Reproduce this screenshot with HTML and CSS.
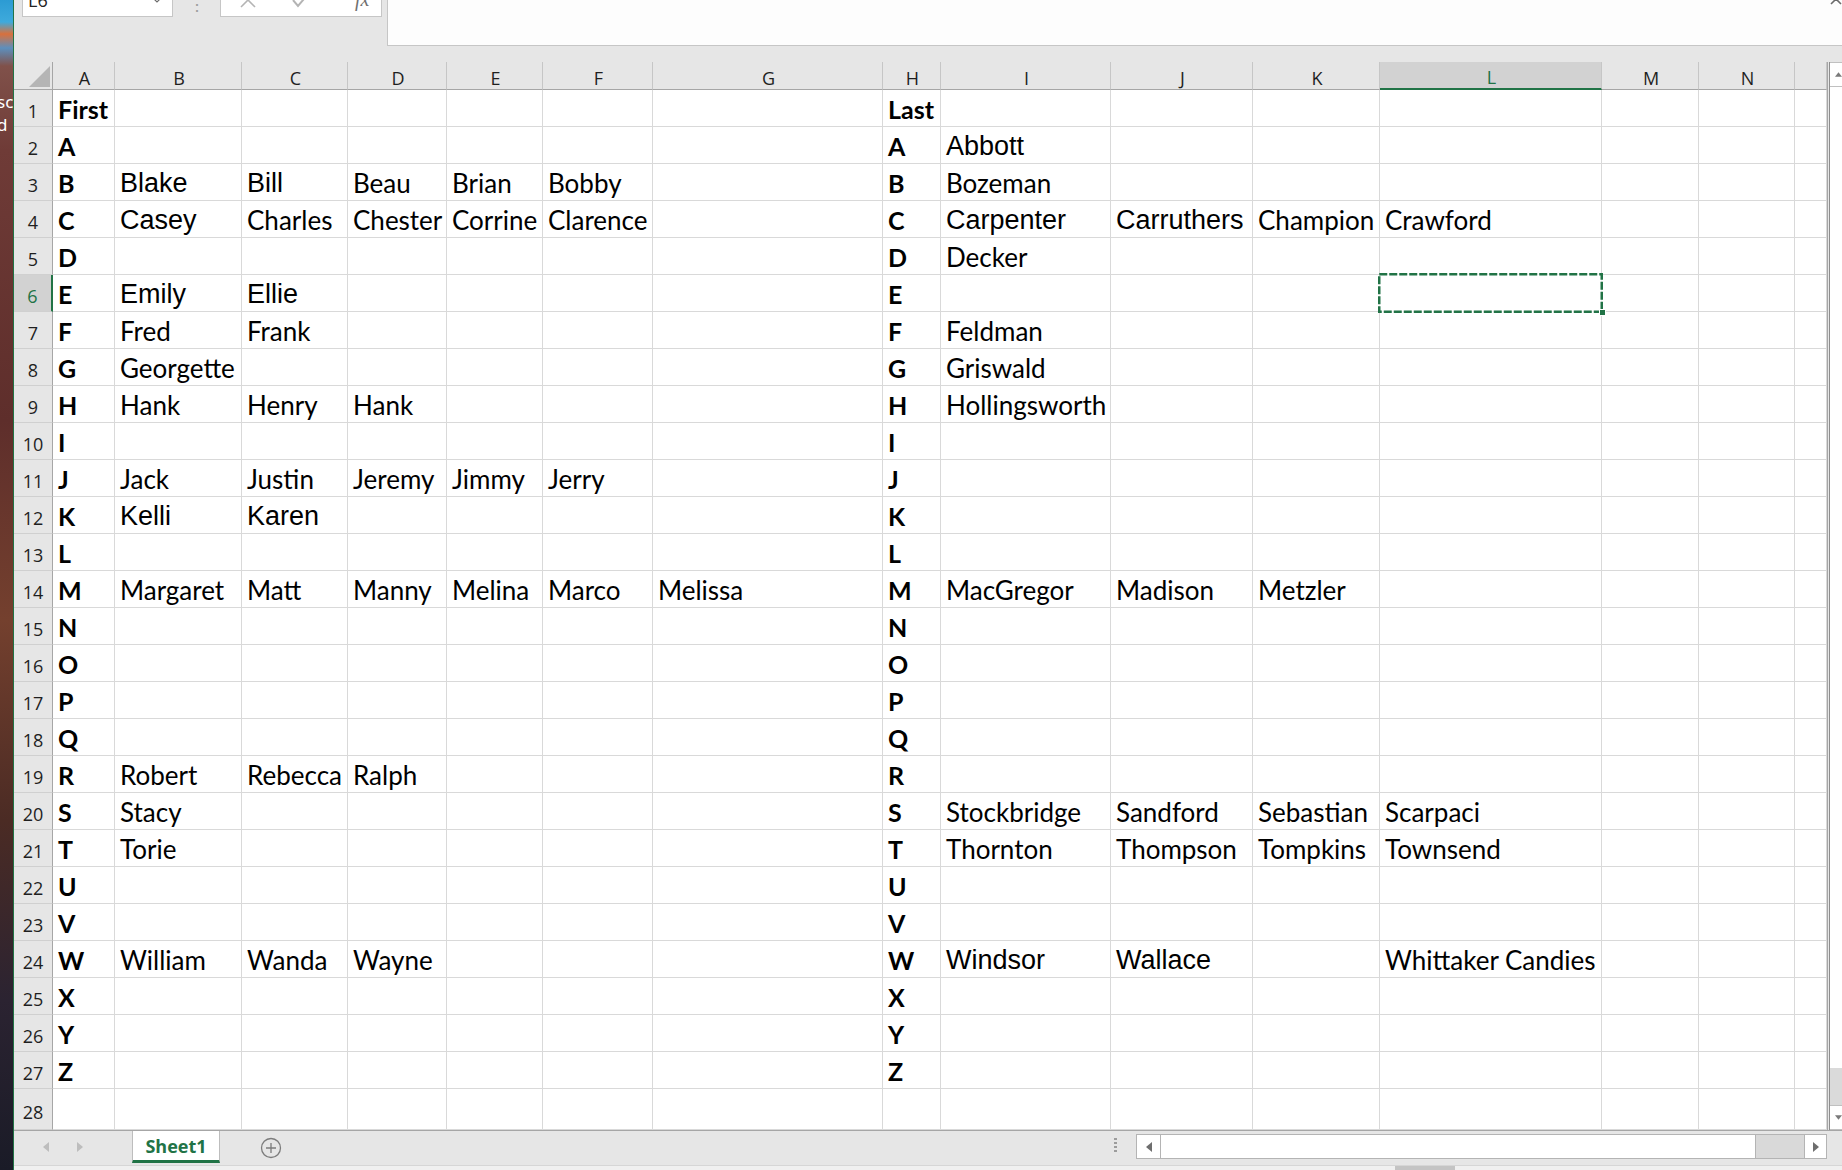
FILE: index.html
```html
<!DOCTYPE html>
<html lang="en">
<head>
  <meta charset="UTF-8">
  <title>Names - Excel</title>
  <link rel="stylesheet" href="styles.css">
</head>
<body>
  <div class="desk">
    <span class="desk-sc">sc</span>
    <span class="desk-d">d</span>
  </div>

  <div class="app">
    <div class="toolbar">
      <div class="namebox">
        <span>L6</span>
        <svg width="10" height="6" viewBox="0 0 10 6"><path d="M1 1 L5 5 L9 1" fill="none" stroke="#6b6b6b" stroke-width="1.2"/></svg>
      </div>
      <div class="grip-top">&#8942;</div>
      <div class="fxbox">
        <svg class="ico" width="18" height="18" viewBox="0 0 18 18"><path d="M2 2 L16 16 M16 2 L2 16" stroke="#b4b4b4" stroke-width="1.6"/></svg>
        <svg class="ico" width="20" height="18" viewBox="0 0 20 18"><path d="M2 9 L7 15 L18 2" fill="none" stroke="#b4b4b4" stroke-width="2"/></svg>
        <span class="fx">fx</span>
      </div>
      <div class="formula"></div>
      <svg class="chev" width="12" height="8" viewBox="0 0 12 8"><path d="M1 7 L6 2 L11 7" fill="none" stroke="#6b6b6b" stroke-width="1.6"/></svg>
    </div>

    <div class="sheet">
      <div class="grid" id="grid"></div>
      <div class="vscroll">
        <div class="vs-btn"><svg width="8" height="5" viewBox="0 0 8 5"><path d="M0 5 L4 0 L8 5 Z" fill="#7a7a7a"/></svg></div>
        <div class="vs-thumb"></div>
        <div class="vs-track"></div>
        <div class="vs-btn"><svg width="8" height="5" viewBox="0 0 8 5"><path d="M0 0 L4 5 L8 0 Z" fill="#7a7a7a"/></svg></div>
      </div>
    </div>

    <div class="tabbar">
      <div class="tab-nav">
        <svg width="6" height="10" viewBox="0 0 6 10"><path d="M6 0 L0 5 L6 10 Z" fill="#bdbdbd"/></svg>
        <svg width="6" height="10" viewBox="0 0 6 10"><path d="M0 0 L6 5 L0 10 Z" fill="#bdbdbd"/></svg>
      </div>
      <div class="tab">Sheet1</div>
      <svg class="add" width="22" height="22" viewBox="0 0 22 22"><circle cx="11" cy="11" r="9.5" fill="none" stroke="#7c7c7c" stroke-width="1.3"/><path d="M11 6 V16 M6 11 H16" stroke="#7c7c7c" stroke-width="1.3"/></svg>
      <div class="spacer"></div>
      <div class="grip"><i></i><i></i><i></i><i></i></div>
      <div class="hscroll">
        <div class="hs-btn"><svg width="6" height="10" viewBox="0 0 6 10"><path d="M6 0 L0 5 L6 10 Z" fill="#6e6e6e"/></svg></div>
        <div class="hs-thumb"></div>
        <div class="hs-track"></div>
        <div class="hs-btn"><svg width="6" height="10" viewBox="0 0 6 10"><path d="M0 0 L6 5 L0 10 Z" fill="#6e6e6e"/></svg></div>
      </div>
    </div>

    <div class="status">
      <div class="status-thumb"></div>
    </div>
  </div>

  <script>
    // ! = bold letter, ^ = cell typed in Arial
    const letter = ch => ['!' + ch, '', '', '', '', '', '', '!' + ch];

    const rows = [
      ['!First', '', '', '', '', '', '', '!Last'],
      ['!A', '', '', '', '', '', '', '!A', '^Abbott'],
      ['!B', '^Blake', '^Bill', 'Beau', 'Brian', 'Bobby', '', '!B', 'Bozeman'],
      ['!C', '^Casey', 'Charles', 'Chester', 'Corrine', 'Clarence', '', '!C', '^Carpenter', '^Carruthers', 'Champion', 'Crawford'],
      ['!D', '', '', '', '', '', '', '!D', 'Decker'],
      ['!E', '^Emily', '^Ellie', '', '', '', '', '!E'],
      ['!F', 'Fred', 'Frank', '', '', '', '', '!F', 'Feldman'],
      ['!G', 'Georgette', '', '', '', '', '', '!G', 'Griswald'],
      ['!H', 'Hank', 'Henry', 'Hank', '', '', '', '!H', 'Hollingsworth'],
      letter('I'),
      ['!J', 'Jack', 'Justin', 'Jeremy', 'Jimmy', 'Jerry', '', '!J'],
      ['!K', '^Kelli', '^Karen', '', '', '', '', '!K'],
      letter('L'),
      ['!M', 'Margaret', 'Matt', 'Manny', 'Melina', 'Marco', 'Melissa', '!M', 'MacGregor', 'Madison', 'Metzler'],
      letter('N'),
      letter('O'),
      letter('P'),
      letter('Q'),
      ['!R', 'Robert', 'Rebecca', 'Ralph', '', '', '', '!R'],
      ['!S', 'Stacy', '', '', '', '', '', '!S', 'Stockbridge', 'Sandford', 'Sebastian', 'Scarpaci'],
      ['!T', 'Torie', '', '', '', '', '', '!T', 'Thornton', 'Thompson', 'Tompkins', 'Townsend'],
      letter('U'),
      letter('V'),
      ['!W', 'William', 'Wanda', 'Wayne', '', '', '', '!W', '^Windsor', '^Wallace', '', 'Whittaker Candies'],
      letter('X'),
      letter('Y'),
      letter('Z'),
      []
    ];

    const cols = ['A', 'B', 'C', 'D', 'E', 'F', 'G', 'H', 'I', 'J', 'K', 'L', 'M', 'N', ''];
    const grid = document.getElementById('grid');

    function addCell(cls, text) {
      const div = document.createElement('div');
      div.className = cls;
      if (text) div.textContent = text;
      grid.appendChild(div);
      return div;
    }

    const corner = addCell('corner');
    corner.innerHTML = '<div class="tri"></div>';

    cols.forEach((c, i) => addCell(i === 11 ? 'ch sel' : 'ch', c));

    rows.forEach((row, r) => {
      addCell(r === 5 ? 'rh sel' : 'rh', String(r + 1));
      cols.forEach((c, i) => {
        let text = row[i] || '';
        let cls = 'c';
        if (text[0] === '!') { cls += ' b'; text = text.slice(1); }
        else if (text[0] === '^') { cls += ' a'; text = text.slice(1); }
        const div = addCell(cls, text);
        if (r === 5 && i === 11) {
          div.classList.add('active');
          div.innerHTML = '<svg class="ants" width="225" height="40" viewBox="0 0 225 40">' +
            '<rect x="1.25" y="1.25" width="222.5" height="37.5" fill="#fff" stroke="#217346" stroke-width="2.5" stroke-dasharray="8 2"/></svg>' +
            '<span class="handle"></span>';
        }
      });
    });
  </script>
</body>
</html>
```

FILE: styles.css
```css
* {
  box-sizing: border-box;
}
body {
  margin: 0;
  width: 1842px;
  height: 1170px;
  overflow: hidden;
  display: flex;
  background-color: #e6e6e6;
  font-family: 'Open Sans', 'Noto Sans', sans-serif;
  color: #1f1f1f;
}

/* desktop peeking out on the left */
.desk {
  width: 13px;
  flex: none;
  position: relative;
  overflow: hidden;
  background: linear-gradient(180deg, #2c9bd3 0, #3eaadc 22px, #d9703c 34px, #5d8fbd 48px, #80514a 66px, #6f3b37 150px, #5e2e2b 420px, #74402e 620px, #4b2b24 820px, #2b2331 1000px, #1a1b27 1170px);
}
.desk span {
  position: absolute;
  left: -3px;
  color: #fff;
  font-size: 17px;
  font-family: 'Noto Sans', sans-serif;
}
.desk-sc { top: 90px; }
.desk-d { top: 113px; }

.app {
  flex: 1;
  min-width: 0;
  display: flex;
  flex-direction: column;
  border-left: 1px solid #217346;
}

/* formula bar, mostly scrolled off the top */
.toolbar {
  height: 62px;
  flex: none;
  display: flex;
  align-items: flex-start;
  padding-left: 8px;
  overflow: hidden;
  position: relative;
}
.namebox {
  width: 151px;
  height: 35px;
  margin-top: -18px;
  background-color: #fff;
  border: 1px solid #c6c6c6;
  display: flex;
  align-items: center;
  justify-content: space-between;
  padding: 0 10px 0 5px;
  font-size: 18px;
  color: #222;
}
.grip-top {
  width: 47px;
  text-align: center;
  color: #a0a0a0;
  font-size: 18px;
  line-height: 14px;
  margin-top: -4px;
}
.fxbox {
  width: 162px;
  height: 35px;
  margin-top: -18px;
  background-color: #fff;
  border: 1px solid #c6c6c6;
  display: flex;
  align-items: center;
  padding-left: 18px;
  gap: 34px;
}
.fx {
  font-family: 'Liberation Serif', serif;
  font-style: italic;
  font-size: 20px;
  color: #707070;
  margin-left: 10px;
}
.formula {
  flex: 1;
  height: 60px;
  margin-top: -14px;
  margin-left: 5px;
  background-color: #fdfdfd;
  border-left: 1px solid #c6c6c6;
  border-bottom: 1px solid #c6c6c6;
}
.chev {
  position: absolute;
  right: 0;
  top: -3px;
}

/* sheet grid */
.sheet {
  height: 1068px;
  flex: none;
  display: flex;
  gap: 1px;
}
.grid {
  width: 1814px;
  flex: none;
  display: grid;
  grid-template-columns: 39px 62px 127px 106px 99px 96px 110px 230px 58px 170px 142px 127px 222px 97px 96px 32px;
  grid-template-rows: 28px repeat(27, 37px) 41px;
  background-color: #fff;
  border-right: 1px solid #a6a6a6;
  overflow: hidden;
}
.corner {
  background-color: #e6e6e6;
  border-right: 1px solid #a6a6a6;
  border-bottom: 1px solid #a6a6a6;
  display: flex;
  justify-content: flex-end;
  align-items: flex-end;
  padding: 0 2px 2px 0;
}
.tri {
  width: 21px;
  height: 21px;
  background-color: #b5b5b5;
  clip-path: polygon(100% 0, 100% 100%, 0 100%);
}
.ch {
  background-color: #e6e6e6;
  border-right: 1px solid #c6c6c6;
  border-bottom: 1px solid #a6a6a6;
  display: flex;
  justify-content: center;
  align-items: center;
  padding: 4px 0 0 2px;
  font-size: 18px;
}
.ch.sel {
  background-color: #d2d2d2;
  border-bottom: 2px solid #217346;
  color: #217346;
}
.rh {
  background-color: #e6e6e6;
  border-right: 1px solid #a6a6a6;
  border-bottom: 1px solid #d0d0d0;
  display: flex;
  justify-content: center;
  align-items: center;
  padding-top: 6px;
  font-size: 18px;
}
.rh.sel {
  background-color: #d2d2d2;
  border-right: 2px solid #217346;
  color: #217346;
}
.c {
  border-right: 1px solid #d9d9d9;
  border-bottom: 1px solid #d9d9d9;
  display: flex;
  align-items: center;
  padding: 2px 0 0 5px;
  white-space: nowrap;
  font-family: Lato, 'Open Sans', sans-serif;
  font-size: 26px;
  color: #000;
}
.c.b {
  font-weight: bold;
  font-size: 25px;
}
.c.a {
  font-family: 'Liberation Sans', Arial, sans-serif;
  font-size: 27px;
}
.c.active {
  position: relative;
}
.ants {
  position: absolute;
  left: -2px;
  top: -2px;
}
.handle {
  position: absolute;
  right: -5px;
  bottom: -5px;
  width: 7px;
  height: 7px;
  background-color: #217346;
  border: 1px solid #fff;
}

/* vertical scrollbar */
.vscroll {
  width: 13px;
  flex: none;
  display: flex;
  flex-direction: column;
  border-left: 1px solid #8e8e8e;
}
.vs-btn {
  height: 25px;
  background-color: #fff;
  border-top: 1px solid #c0c0c0;
  border-bottom: 1px solid #c0c0c0;
  display: flex;
  align-items: center;
  padding-left: 5px;
}
.vs-thumb {
  flex: 1;
  background-color: #fff;
}
.vs-track {
  height: 37px;
  background-color: #dadada;
}

/* sheet tabs and horizontal scrollbar */
.tabbar {
  height: 35px;
  flex: none;
  display: flex;
  align-items: flex-start;
  border-top: 1px solid #a6a6a6;
}
.tab-nav {
  width: 118px;
  height: 32px;
  display: flex;
  align-items: center;
  padding-left: 29px;
  gap: 28px;
}
.tab {
  width: 88px;
  height: 32px;
  background-color: #fff;
  border-left: 1px solid #bdbdbd;
  border-right: 1px solid #bdbdbd;
  border-bottom: 3px solid #217346;
  display: flex;
  align-items: center;
  justify-content: center;
  font-weight: bold;
  font-size: 18px;
  color: #217346;
}
.add {
  margin: 6px 0 0 40px;
}
.spacer {
  flex: 1;
}
.grip {
  width: 4px;
  margin-top: 7px;
  display: flex;
  flex-direction: column;
  gap: 2px;
}
.grip i {
  width: 3px;
  height: 2px;
  background-color: #9c9c9c;
}
.hscroll {
  width: 691px;
  height: 25px;
  margin: 3px 15px 0 18px;
  display: flex;
  border: 1px solid #b4b4b4;
  background-color: #fff;
}
.hs-btn {
  width: 24px;
  display: flex;
  align-items: center;
  justify-content: center;
  background-color: #fff;
  border-right: 1px solid #b4b4b4;
}
.hs-btn:last-child {
  width: 22px;
  border-right: none;
  border-left: 1px solid #b4b4b4;
}
.hs-thumb {
  flex: 1;
  background-color: #fff;
  border-right: 1px solid #b4b4b4;
}
.hs-track {
  width: 48px;
  background-color: #d9d9d9;
}

.status {
  flex: 1;
  background-color: #f0f0f0;
  border-top: 1px solid #d6d6d6;
  padding-left: 1381px;
}
.status-thumb {
  width: 60px;
  height: 100%;
  background-color: #c4c4c4;
}
```
